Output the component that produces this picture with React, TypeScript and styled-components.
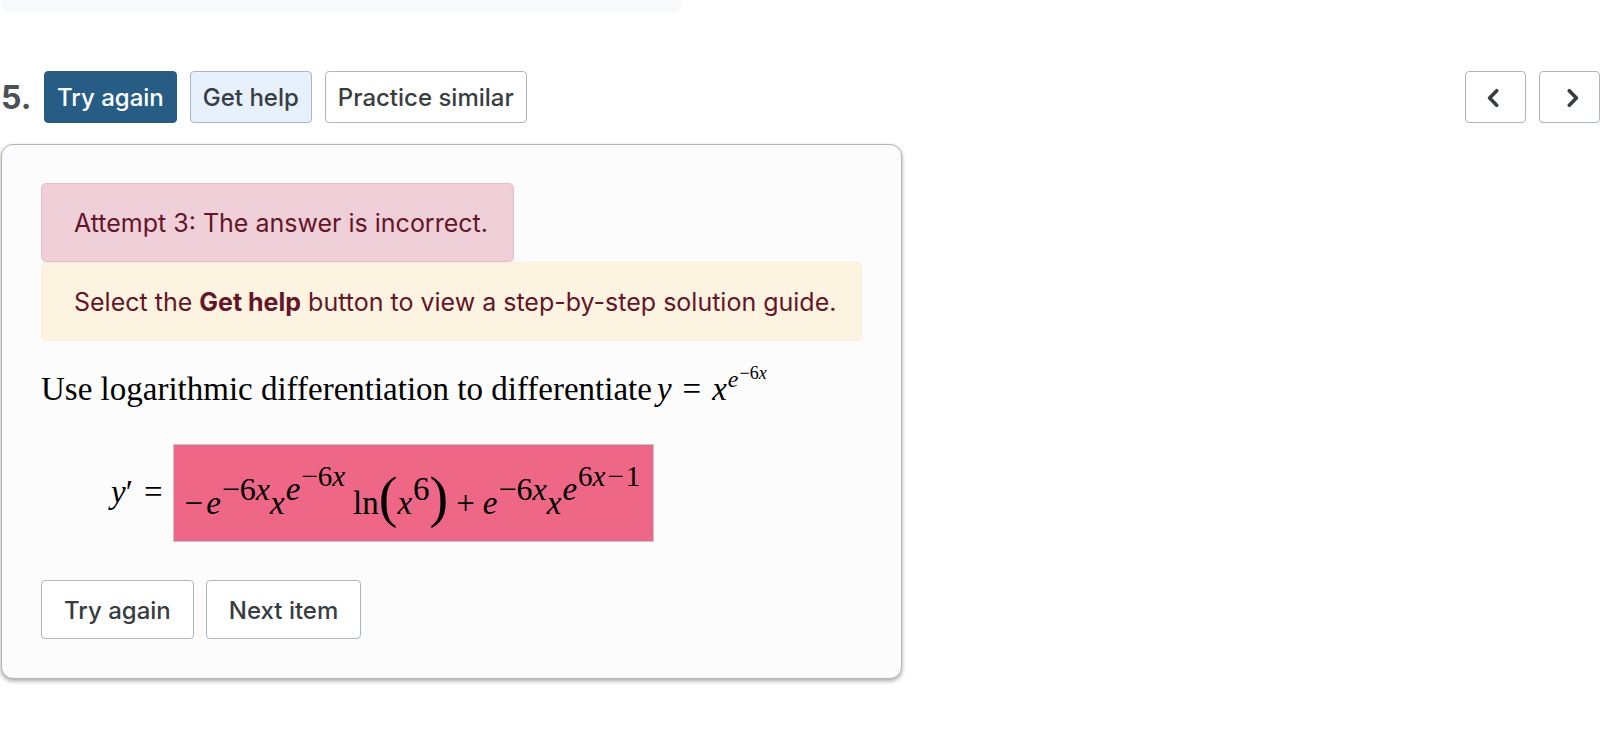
import React from "react";
import styled, { createGlobalStyle } from "styled-components";

const GlobalStyle = createGlobalStyle`
  * { box-sizing: border-box; }
  body {
    margin: 0;
    background: #fff;
    color: #373d41;
    font-family: Inter, "Liberation Sans", sans-serif;
    font-size: 24px;
  }
`;

const Page = styled.main`
  padding: 0 16px 16px 1px;
`;

const PreviousPanel = styled.div`
  height: 12px;
  max-width: 681px;
  border-radius: 0 0 8px 8px;
  background: #f8f9fb;
`;

const Toolbar = styled.header`
  display: flex;
  align-items: center;
  gap: 13px;
  margin: 59px 0 21px;
`;

const ItemNumber = styled.h2`
  margin: 0;
  padding-top: 2px;
  width: 30px;
  font-size: 32px;
  line-height: 50px;
  font-weight: 700;
  color: #4c5156;
  white-space: nowrap;
`;

type Tone = "primary" | "info" | "plain";

const tones = {
  primary: { background: "#275d84", border: "#275d84", color: "#ffffff" },
  info: { background: "#e7f1fe", border: "#adb5bd", color: "#373d41" },
  plain: { background: "#ffffff", border: "#adb5bd", color: "#373d41" },
};

const Button = styled.button<{ $tone?: Tone; $large?: boolean }>`
  height: ${(p) => (p.$large ? 59 : 52)}px;
  padding: 2px ${(p) => (p.$large ? 22 : 12)}px 0;
  border: 1px solid ${(p) => tones[p.$tone ?? "plain"].border};
  border-radius: 4px;
  background: ${(p) => tones[p.$tone ?? "plain"].background};
  color: ${(p) => tones[p.$tone ?? "plain"].color};
  font: 500 24px/36px Inter, "Liberation Sans", sans-serif;
  white-space: nowrap;
  cursor: pointer;
`;

const ItemNav = styled.nav`
  display: flex;
  gap: 13px;
  margin-left: auto;
`;

const NavButton = styled(Button)<{ $side: "left" | "right" }>`
  display: flex;
  align-items: center;
  justify-content: center;
  width: 61px;
  padding: ${(p) => (p.$side === "left" ? "2px 6px 0 0" : "2px 0 0 6px")};
`;

const Card = styled.section`
  width: fit-content;
  padding: 38px 39px 39px;
  border: 1px solid #adb5bd;
  border-radius: 12px;
  background: #fcfcfd;
  box-shadow: 0 2px 4px rgba(0, 0, 0, 0.35);
`;

const Alert = styled.p<{ $kind: "error" | "hint" }>`
  width: fit-content;
  margin: 0;
  padding: 21px 25px 20px 32px;
  border: 1px solid ${(p) => (p.$kind === "error" ? "#e8bccb" : "#fcefd8")};
  border-radius: 5px;
  background: ${(p) => (p.$kind === "error" ? "#efd0d9" : "#fdf3e1")};
  color: #651528;
  font-size: 25px;
  line-height: 36px;
`;

const Question = styled.p`
  display: flex;
  align-items: baseline;
  gap: 5px;
  margin: 24px 0 0;
  color: #000;
  font: 33px/48px "Liberation Serif", serif;
`;

const AnswerRow = styled.div`
  display: flex;
  align-items: center;
  gap: 10px;
  margin: 31px 0 38px 70px;
  color: #000;
  font: 33px/48px "Liberation Serif", serif;
`;

const Formula = styled.span`
  white-space: nowrap;
  line-height: 1;
`;

const AnswerLabel = styled(Formula)`
  padding-bottom: 2px;
`;

const LabelEquals = styled.span`
  margin-left: 11px;
`;

const Var = styled.i`
  font-style: italic;
`;

const Relation = styled.span`
  margin: 0 11px;
`;

const Operator = styled.span`
  margin: 0 8px;
`;

const Sign = styled.span`
  margin-right: 3px;
`;

const InnerSign = styled.span`
  margin: 0 2px;
`;

const Power = styled.sup<{ $size: number; $rise: number }>`
  margin-left: 1px;
  font-size: ${(p) => p.$size}px;
  line-height: 0;
  vertical-align: ${(p) => p.$rise}px;
`;

const Paren = styled.span`
  font-size: 56px;
  line-height: 0;
  vertical-align: -2px;
`;

const Func = styled.span`
  margin-left: 8px;
`;

const Answer = styled.div`
  display: flex;
  align-items: center;
  height: 98px;
  padding: 10px 13px 0 11px;
  border: 1px solid #c8c5c8;
  background: #ee6787;
`;

const Actions = styled.div`
  display: flex;
  gap: 12px;
`;

function Chevron({ side }: { side: "left" | "right" }) {
  return (
    <svg width="12" height="20" viewBox="0 0 12 20" fill="none" aria-hidden="true">
      <path
        d={side === "left" ? "M9.7 2.7 2.6 10l7.1 7.3" : "M2.3 2.7 9.4 10l-7.1 7.3"}
        stroke="#373d41"
        strokeWidth="3.6"
        strokeLinecap="round"
        strokeLinejoin="round"
      />
    </svg>
  );
}

export default function App() {
  return (
    <>
      <GlobalStyle />
      <Page>
        <PreviousPanel />
        <Toolbar>
          <ItemNumber>5.</ItemNumber>
          <Button $tone="primary">Try again</Button>
          <Button $tone="info">Get help</Button>
          <Button>Practice similar</Button>
          <ItemNav aria-label="Items">
            <NavButton $side="left" aria-label="Previous item">
              <Chevron side="left" />
            </NavButton>
            <NavButton $side="right" aria-label="Next item">
              <Chevron side="right" />
            </NavButton>
          </ItemNav>
        </Toolbar>
        <Card>
          <Alert $kind="error">Attempt 3: The answer is incorrect.</Alert>
          <Alert $kind="hint">
            Select the <b>Get help</b> button to view a step-by-step solution guide.
          </Alert>
          <Question>
            <span>Use logarithmic differentiation to differentiate</span>
            <Formula>
              <Var>y</Var>
              <Relation>=</Relation>
              <Var>x</Var>
              <Power $size={24} $rise={13}>
                <Var>e</Var>
                <Power $size={18} $rise={8}>
                  −6<Var>x</Var>
                </Power>
              </Power>
            </Formula>
          </Question>
          <AnswerRow>
            <AnswerLabel>
              <Var>y</Var>′<LabelEquals>=</LabelEquals>
            </AnswerLabel>
            <Answer>
              <Formula>
                <Sign>−</Sign>
                <Var>e</Var>
                <Power $size={32} $rise={14}>
                  −6<Var>x</Var>
                </Power>
                <Var>x</Var>
                <Power $size={33} $rise={14}>
                  <Var>e</Var>
                  <Power $size={29} $rise={14}>
                    −6<Var>x</Var>
                  </Power>
                </Power>
                <Func>ln</Func>
                <Paren>(</Paren>
                <Var>x</Var>
                <Power $size={33} $rise={14}>
                  6
                </Power>
                <Paren>)</Paren>
                <Operator>+</Operator>
                <Var>e</Var>
                <Power $size={32} $rise={14}>
                  −6<Var>x</Var>
                </Power>
                <Var>x</Var>
                <Power $size={33} $rise={14}>
                  <Var>e</Var>
                  <Power $size={29} $rise={14}>
                    6<Var>x</Var>
                    <InnerSign>−</InnerSign>1
                  </Power>
                </Power>
              </Formula>
            </Answer>
          </AnswerRow>
          <Actions>
            <Button $large>Try again</Button>
            <Button $large>Next item</Button>
          </Actions>
        </Card>
      </Page>
    </>
  );
}
